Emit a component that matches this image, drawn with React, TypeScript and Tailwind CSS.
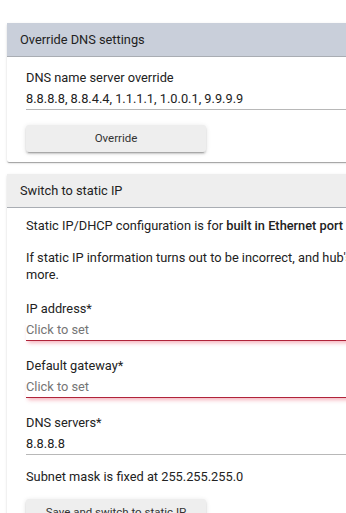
import type { FC, ReactNode } from "react";

const cardShadow =
  "shadow-[0_2px_1px_-1px_rgba(0,0,0,0.2),0_1px_1px_0_rgba(0,0,0,0.14),0_1px_3px_0_rgba(0,0,0,0.12)]";

const Card: FC<{ title: string; headerClass: string; children: ReactNode }> = ({
  title,
  headerClass,
  children,
}) => (
  <div className={`w-[640px] rounded-[2px] bg-white ${cardShadow}`}>
    <div
      className={`flex h-[34px] items-center border-b border-[#a9adb3] pl-[13px] text-[12.8px] text-[#222] ${headerClass}`}
    >
      {title}
    </div>
    {children}
  </div>
);

const Field: FC<{ label: string; value: string; empty?: boolean }> = ({ label, value, empty }) => (
  <div>
    <div className="text-[12.8px] leading-[20px] text-[#222]">{label}</div>
    <div
      className={
        empty
          ? "border-b border-[#b0243a] text-[12.8px] leading-[21px] text-[#757575] shadow-[0_4px_4px_-2px_rgba(225,40,70,0.35)]"
          : "border-b border-[#b8b8b8] text-[12.8px] leading-[21px] text-[#222]"
      }
    >
      {value}
    </div>
  </div>
);

const Button: FC<{ label: string }> = ({ label }) => (
  <button
    type="button"
    className="flex h-[27px] w-[180px] items-center justify-center rounded-[3px] bg-[#eeeeee] text-[11.5px] text-[#333] shadow-[0_3px_1px_-2px_rgba(0,0,0,0.2),0_2px_2px_0_rgba(0,0,0,0.14),0_1px_5px_0_rgba(0,0,0,0.12)]"
  >
    {label}
  </button>
);

const App: FC = () => {
  return (
    <div
      className="h-[513px] w-full overflow-hidden bg-white"
      style={{ fontFamily: "Roboto, 'Noto Sans', sans-serif" }}
    >
      <div className="flex flex-col gap-[12px] pl-[7px] pt-[23px]">
        <Card title="Override DNS settings" headerClass="bg-[#c9cfda]">
          <div className="pb-[10px] pl-[19px] pt-[11px]">
            <Field label="DNS name server override" value="8.8.8.8, 8.8.4.4, 1.1.1.1, 1.0.0.1, 9.9.9.9" />
            <div className="mt-[15px]">
              <Button label="Override" />
            </div>
          </div>
        </Card>

        <Card title="Switch to static IP" headerClass="bg-[#eeeeee]">
          <div className="pl-[19px] pt-[9px] text-[12.8px] text-[#222]">
            <div className="whitespace-nowrap leading-[17px]">
              Static IP/DHCP configuration is for <b className="font-medium">built in Ethernet port</b> only.
            </div>
            <div className="mt-[15px] leading-[17px]">
              <div className="whitespace-nowrap">
                If static IP information turns out to be incorrect, and hub's network becomes unreachable, hub will revert
                to DHCP after 5 minutes or
              </div>
              <div>more.</div>
            </div>
            <div className="mt-[16px] flex flex-col gap-[15px]">
              <Field label="IP address*" value="Click to set" empty />
              <Field label="Default gateway*" value="Click to set" empty />
              <Field label="DNS servers*" value="8.8.8.8" />
            </div>
            <div className="mt-[13px] leading-[17px]">Subnet mask is fixed at 255.255.255.0</div>
            <div className="mt-[14px] pb-[10px]">
              <Button label="Save and switch to static IP" />
            </div>
          </div>
        </Card>
      </div>
    </div>
  );
};

export default App;
